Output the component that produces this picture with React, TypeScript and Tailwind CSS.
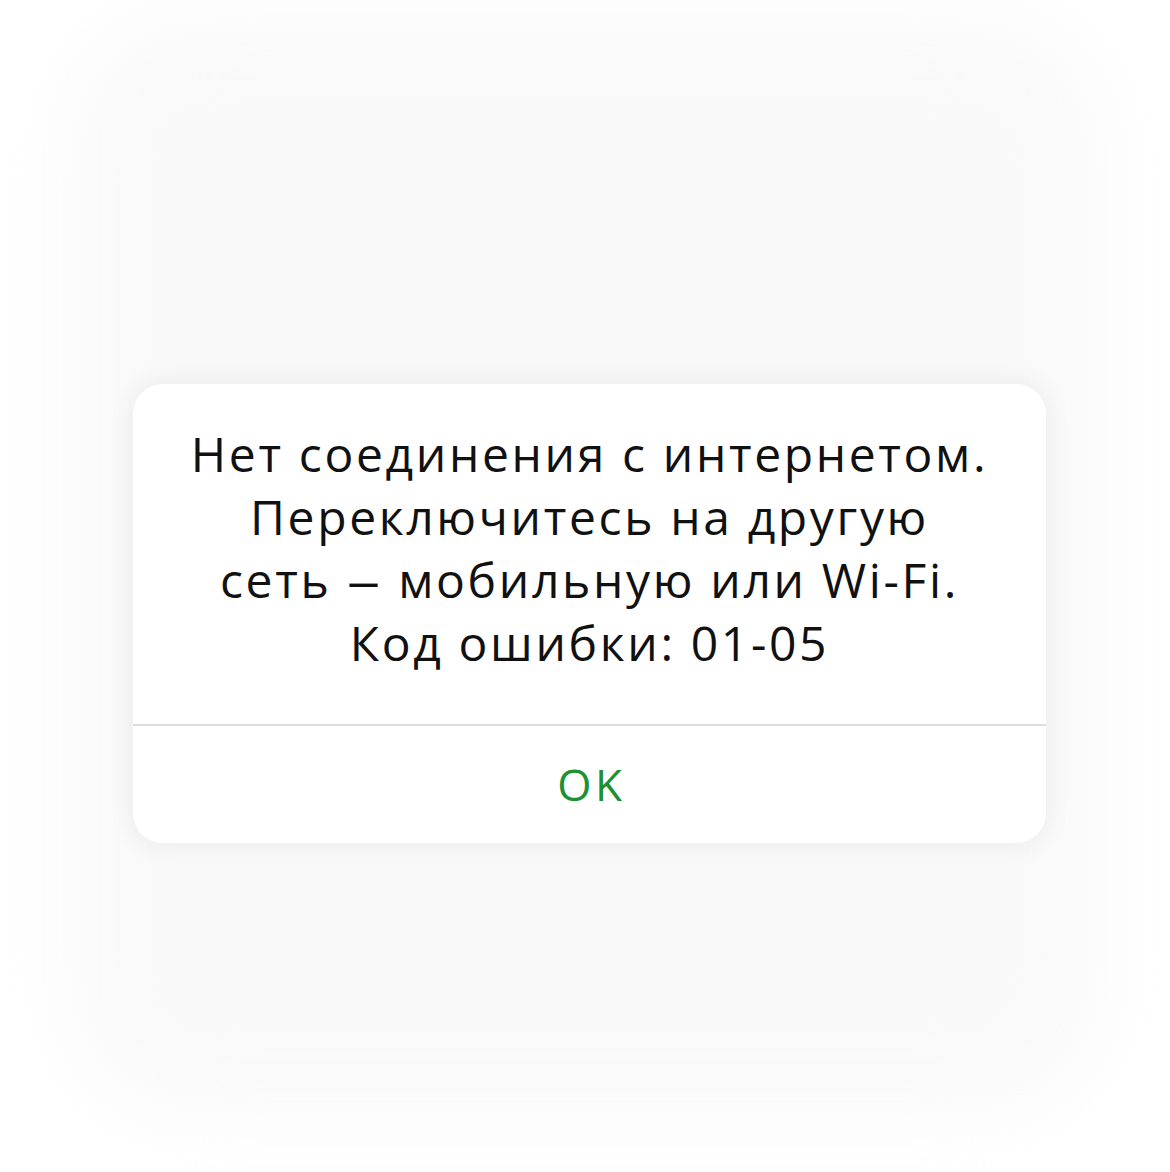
import React from "react";

export default function App() {
  return (
    <div
      className="grid h-[1172px] w-[1170px] overflow-hidden bg-white"
      style={{ fontFamily: '"Open Sans", "Noto Sans", sans-serif' }}
    >
      <div className="col-start-1 row-start-1 px-[70px] pt-[20px] pb-[60px]">
        <div className="h-full w-full rounded-[120px] bg-[#f9f9fa] blur-2xl" />
      </div>
      <div className="col-start-1 row-start-1 z-10 flex items-start justify-start pl-[133px] pt-[384px]">
        <div className="w-[913px] rounded-[30px] bg-white shadow-[0_0_28px_rgba(0,0,0,0.07)]">
          <div className="flex flex-col items-center pt-[38px] pb-[50px] text-center text-[48px] leading-[63px] tracking-[0.055em] text-[#111]">
            <p>Нет соединения с интернетом.</p>
            <p>Переключитесь на другую</p>
            <p>
              сеть <span className="mx-[5px] inline-block scale-x-[1.4]">–</span> мобильную или Wi-Fi.
            </p>
            <p>Код ошибки: 01-05</p>
          </div>
          <div className="h-[2px] bg-[#dddddd]" />
          <div className="flex h-[117px] items-center justify-center pb-[1px] pl-[0.08em] text-[44px] font-medium tracking-[0.08em] text-[#1b9131]">
            OK
          </div>
        </div>
      </div>
    </div>
  );
}
